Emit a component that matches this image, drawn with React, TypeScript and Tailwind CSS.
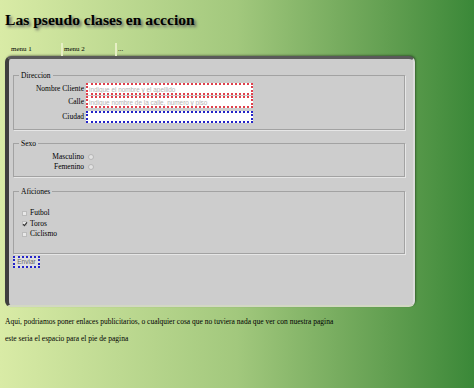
import React from "react";

const serif = "font-['Liberation_Serif','Times_New_Roman',serif]";
const sans = "font-['Liberation_Sans',Arial,sans-serif]";

const menu = [
  { label: "menu 1", cls: "w-[56px] pl-[6px]" },
  { label: "menu 2", cls: "w-[54px] pl-[1px] border-l-2 border-[#e6efc4]" },
  { label: "...", cls: "pl-[1px] border-l-2 border-[#e6efc4]" },
];

const fieldset =
  "mx-0 border border-[#a2a2a2] shadow-[1px_1px_0_#e6e6e6] px-0 min-w-0";
const legend = "ml-[5px] px-[2px] text-[7.5px] leading-[9px]";

function Row({ label, red, placeholder, className }: { label: string; red?: boolean; placeholder?: string; className?: string }) {
  return (
    <div className={`flex items-center ${className ?? ""}`}>
      <label className="w-[70px] text-right text-[7.5px] leading-[12px] pr-[2px] box-content">{label}</label>
      <input
        readOnly
        placeholder={placeholder}
        className={`w-[167px] h-[12px] bg-white border-2 border-dotted px-[1px] text-[6.4px] ${sans} placeholder:text-[#b4b4b4] outline-none ${
          red ? "border-[#e0404c]" : "border-[#2424c8]"
        }`}
      />
    </div>
  );
}

function Radio({ label }: { label: string }) {
  return (
    <div className="flex items-center h-[10px]">
      <span className="w-[70px] text-right text-[7.5px] leading-[10px]">{label}</span>
      <span className="ml-[4px] w-[6px] h-[6px] rounded-full border border-[#b6b6b6] bg-[#e2e2e2]" />
    </div>
  );
}

function Check({ label, checked }: { label: string; checked?: boolean }) {
  return (
    <div className="flex items-center h-[10.5px] pl-[8px]">
      <span className="relative w-[5px] h-[5px] border border-[#bcbcbc] bg-[#e8e8e8]">
        {checked && (
          <svg viewBox="0 0 6 6" className="absolute -left-[1px] -top-[1px] w-[6px] h-[6px]">
            <path d="M1 3.2 L2.4 4.6 L5 1.4" fill="none" stroke="#333" strokeWidth="1.1" />
          </svg>
        )}
      </span>
      <span className="ml-[3px] text-[7.5px] leading-[10.5px]">{label}</span>
    </div>
  );
}

export default function App() {
  return (
    <div className={`${serif} min-h-[388px] w-full bg-linear-to-r from-[#d9eba6] via-[#a2c87d] to-[#3a8838] pl-[5px] text-black overflow-hidden`}>
      <h1 className="pt-[12px] text-[15.6px] leading-[16px] font-bold [text-shadow:2px_2px_3px_#5e5e5e]">
        Las pseudo clases en acccion
      </h1>

      <ul className="mt-[15px] flex h-[13px] text-[7px] leading-[13px]">
        {menu.map((m) => (
          <li key={m.label} className={m.cls}>{m.label}</li>
        ))}
      </ul>

      {/* Main panel */}
      <form className="w-[410px] h-[251px] box-border rounded-[6px] bg-[#cdcdcd] border-t-[3px] border-l-[4px] border-r-2 border-b-2 border-t-[#5a5a5a] border-l-[#3e3e3e] border-r-[#dcdcdc] border-b-[#d2d8c4] pl-[4px] pr-[8px] shadow-[1px_-1px_2px_rgba(0,0,0,0.35)]">
        <fieldset className={`${fieldset} mt-[12px] pb-[6px]`}>
          <legend className={legend}>Direccion</legend>
          <div className="pt-[3px]">
            <Row label="Nombre Cliente" red placeholder="indique el nombre y el apellido" />
            <Row label="Calle" red placeholder="indique nombre de la calle, numero y piso" className="mt-[1px]" />
            <Row label="Ciudad" className="mt-[3px]" />
          </div>
        </fieldset>

        <fieldset className={`${fieldset} mt-[9px] pb-[4px]`}>
          <legend className={legend}>Sexo</legend>
          <div className="pt-[4px]">
            <Radio label="Masculino" />
            <Radio label="Femenino" />
          </div>
        </fieldset>

        <fieldset className={`${fieldset} mt-[10px] pb-[13px]`}>
          <legend className={legend}>Aficiones</legend>
          <div className="pt-[12px]">
            <Check label="Futbol" />
            <Check label="Toros" checked />
            <Check label="Ciclismo" />
          </div>
        </fieldset>

        <button
          type="button"
          className={`block mt-[2px] w-[27px] h-[12px] border-2 border-dotted border-[#2424c8] bg-[#dedede] text-[6.5px] leading-[8px] text-[#6a6a6a] ${sans}`}
        >
          Enviar
        </button>
      </form>

      <p className="mt-[10px] text-[7.5px] leading-[10px]">
        Aqui, podriamos poner enlaces publicitarios, o cualquier cosa que no tuviera nada que ver con nuestra pagina
      </p>
      <p className="mt-[7px] text-[7.5px] leading-[10px]">este seria el espacio para el pie de pagina</p>
    </div>
  );
}
